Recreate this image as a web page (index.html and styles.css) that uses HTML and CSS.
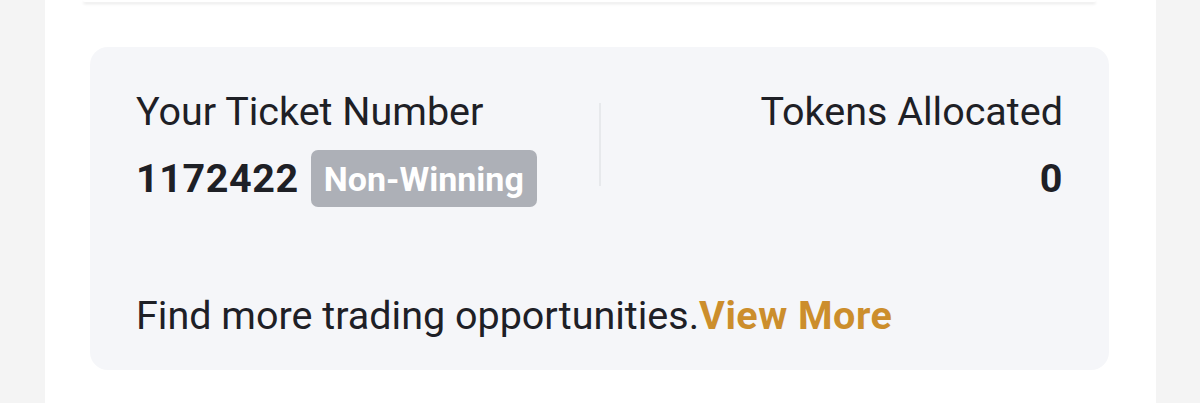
FILE: index.html
```html
<!DOCTYPE html>
<html lang="en">
<head>
<meta charset="utf-8">
<title>Ticket</title>
<link rel="stylesheet" href="styles.css">
</head>
<body>
<div class="page">
  <div class="prev-card"></div>
  <section class="card">
    <div class="stats">
      <div class="col col-left">
        <div class="label">Your Ticket Number</div>
        <div class="value-row">
          <span class="value">1172422</span>
          <span class="badge">Non-Winning</span>
        </div>
      </div>
      <div class="divider"></div>
      <div class="col col-right">
        <div class="label">Tokens Allocated</div>
        <div class="value-row value-row-right">
          <span class="value">0</span>
        </div>
      </div>
    </div>
    <p class="more">Find more trading opportunities.<a class="link" href="#">View More</a></p>
  </section>
</div>
</body>
</html>
```

FILE: styles.css
```css
html, body {
  margin: 0;
  padding: 0;
}
body {
  background: #f4f4f4;
  font-family: Roboto, "Liberation Sans", sans-serif;
  color: #1e2026;
}
.page {
  background: #ffffff;
  margin: 0 44px 0 45px;
  height: 403px;
  overflow: hidden;
  box-sizing: border-box;
}
.prev-card {
  height: 2px;
  margin: 0 60px 0 38px;
  background: #ffffff;
  border-radius: 0 0 10px 10px;
  box-shadow: 0 2px 3px rgba(0, 0, 0, 0.10);
}
.card {
  margin: 45px 47px 0 45px;
  height: 323px;
  box-sizing: border-box;
  background: #f5f6f9;
  border-radius: 18px;
  padding: 43px 46px 0 46px;
}
.stats {
  display: flex;
  align-items: flex-start;
}
.col {
  flex: 1;
  display: flex;
  flex-direction: column;
}
.col-right {
  align-items: flex-end;
}
.label {
  font-size: 39.5px;
  line-height: 44px;
  font-weight: 400;
}
.value-row {
  display: flex;
  align-items: center;
  margin-top: 16px;
  height: 57px;
}
.value {
  font-size: 39.5px;
  font-weight: 700;
  line-height: 44px;
  letter-spacing: 0.6px;
}
.badge {
  margin-left: 12px;
  height: 57px;
  box-sizing: border-box;
  padding: 0 13px;
  display: flex;
  align-items: center;
  background: #adb0b7;
  color: #ffffff;
  font-size: 34px;
  font-weight: 700;
  border-radius: 7px;
}
.divider {
  width: 2px;
  height: 83px;
  background: #e7e9ec;
  margin-top: 13px;
}
.more {
  margin: 87px 0 0 0;
  font-size: 39.5px;
  line-height: 44px;
}
.link {
  color: #cc8e2c;
  font-weight: 700;
  letter-spacing: 0.5px;
  text-decoration: none;
}
```
